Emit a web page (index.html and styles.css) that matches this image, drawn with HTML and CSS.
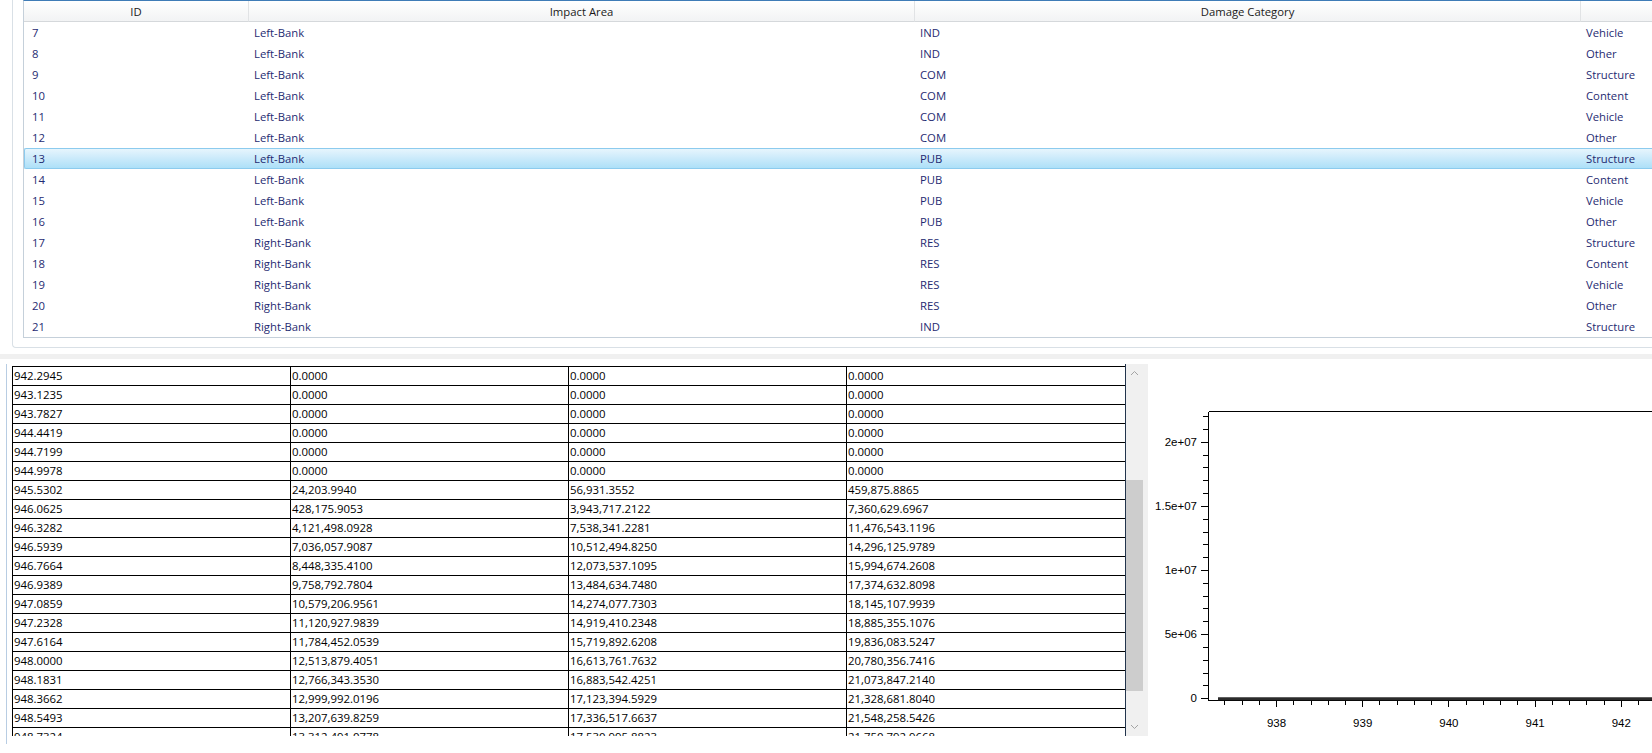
FILE: index.html
```html
<!DOCTYPE html>
<html>
<head>
  <title>Damage Functions</title>
  <link rel="stylesheet" href="styles.css">
</head>
<body>
  <div class="top-panel">
    <div class="group-box">
      <table class="data-grid">
        <colgroup>
          <col class="c-id">
          <col class="c-wide">
          <col class="c-wide">
          <col class="c-last">
        </colgroup>
        <thead>
          <tr>
            <th>ID</th>
            <th>Impact Area</th>
            <th>Damage Category</th>
            <th></th>
          </tr>
        </thead>
        <tbody>
          <tr><td>7</td><td>Left-Bank</td><td>IND</td><td>Vehicle</td></tr>
          <tr><td>8</td><td>Left-Bank</td><td>IND</td><td>Other</td></tr>
          <tr><td>9</td><td>Left-Bank</td><td>COM</td><td>Structure</td></tr>
          <tr><td>10</td><td>Left-Bank</td><td>COM</td><td>Content</td></tr>
          <tr><td>11</td><td>Left-Bank</td><td>COM</td><td>Vehicle</td></tr>
          <tr><td>12</td><td>Left-Bank</td><td>COM</td><td>Other</td></tr>
          <tr class="selected"><td>13</td><td>Left-Bank</td><td>PUB</td><td>Structure</td></tr>
          <tr><td>14</td><td>Left-Bank</td><td>PUB</td><td>Content</td></tr>
          <tr><td>15</td><td>Left-Bank</td><td>PUB</td><td>Vehicle</td></tr>
          <tr><td>16</td><td>Left-Bank</td><td>PUB</td><td>Other</td></tr>
          <tr><td>17</td><td>Right-Bank</td><td>RES</td><td>Structure</td></tr>
          <tr><td>18</td><td>Right-Bank</td><td>RES</td><td>Content</td></tr>
          <tr><td>19</td><td>Right-Bank</td><td>RES</td><td>Vehicle</td></tr>
          <tr><td>20</td><td>Right-Bank</td><td>RES</td><td>Other</td></tr>
          <tr><td>21</td><td>Right-Bank</td><td>IND</td><td>Structure</td></tr>
        </tbody>
      </table>
    </div>
  </div>

  <div class="splitter"></div>

  <div class="bottom-panel">
    <div class="grid-area">
      <div class="grid-view">
        <div class="values-wrap">
          <table class="values">
            <colgroup>
              <col class="v-col">
              <col class="v-col">
              <col class="v-col">
              <col class="v-col">
            </colgroup>
            <tbody>
              <tr><td>942.2945</td><td>0.0000</td><td>0.0000</td><td>0.0000</td></tr>
              <tr><td>943.1235</td><td>0.0000</td><td>0.0000</td><td>0.0000</td></tr>
              <tr><td>943.7827</td><td>0.0000</td><td>0.0000</td><td>0.0000</td></tr>
              <tr><td>944.4419</td><td>0.0000</td><td>0.0000</td><td>0.0000</td></tr>
              <tr><td>944.7199</td><td>0.0000</td><td>0.0000</td><td>0.0000</td></tr>
              <tr><td>944.9978</td><td>0.0000</td><td>0.0000</td><td>0.0000</td></tr>
              <tr><td>945.5302</td><td>24,203.9940</td><td>56,931.3552</td><td>459,875.8865</td></tr>
              <tr><td>946.0625</td><td>428,175.9053</td><td>3,943,717.2122</td><td>7,360,629.6967</td></tr>
              <tr><td>946.3282</td><td>4,121,498.0928</td><td>7,538,341.2281</td><td>11,476,543.1196</td></tr>
              <tr><td>946.5939</td><td>7,036,057.9087</td><td>10,512,494.8250</td><td>14,296,125.9789</td></tr>
              <tr><td>946.7664</td><td>8,448,335.4100</td><td>12,073,537.1095</td><td>15,994,674.2608</td></tr>
              <tr><td>946.9389</td><td>9,758,792.7804</td><td>13,484,634.7480</td><td>17,374,632.8098</td></tr>
              <tr><td>947.0859</td><td>10,579,206.9561</td><td>14,274,077.7303</td><td>18,145,107.9939</td></tr>
              <tr><td>947.2328</td><td>11,120,927.9839</td><td>14,919,410.2348</td><td>18,885,355.1076</td></tr>
              <tr><td>947.6164</td><td>11,784,452.0539</td><td>15,719,892.6208</td><td>19,836,083.5247</td></tr>
              <tr><td>948.0000</td><td>12,513,879.4051</td><td>16,613,761.7632</td><td>20,780,356.7416</td></tr>
              <tr><td>948.1831</td><td>12,766,343.3530</td><td>16,883,542.4251</td><td>21,073,847.2140</td></tr>
              <tr><td>948.3662</td><td>12,999,992.0196</td><td>17,123,394.5929</td><td>21,328,681.8040</td></tr>
              <tr><td>948.5493</td><td>13,207,639.8259</td><td>17,336,517.6637</td><td>21,548,258.5426</td></tr>
              <tr><td>948.7324</td><td>13,312,491.0778</td><td>17,530,995.8823</td><td>21,750,792.9668</td></tr>
            </tbody>
          </table>
        </div>
        <div class="scrollbar">
          <div class="sb-btn">
            <svg width="9" height="6" viewBox="0 0 9 6"><path d="M1 5 L4.5 1.5 L8 5" fill="none" stroke="#a3a3a3" stroke-width="1"/></svg>
          </div>
          <div class="sb-thumb"></div>
          <div class="sb-btn down">
            <svg width="9" height="6" viewBox="0 0 9 6"><path d="M1 1 L4.5 4.5 L8 1" fill="none" stroke="#a3a3a3" stroke-width="1"/></svg>
          </div>
        </div>
      </div>
    </div>

    <div class="chart">
      <svg class="plot" width="504" height="389" viewBox="0 0 504 389">
        <g class="axes">
          <line x1="60.5" y1="47.5" x2="60.5" y2="337"/>
          <line x1="60.5" y1="47.5" x2="504" y2="47.5"/>
          <line x1="60.5" y1="336.5" x2="504" y2="336.5"/>
          <g id="y-ticks"></g>
          <g id="x-ticks"></g>
        </g>
        <line class="series" x1="70" y1="334.7" x2="504" y2="334.7"/>
        <g class="y-labels">
          <text x="49" y="338.3">0</text>
          <text x="49" y="274.2">5e+06</text>
          <text x="49" y="210">1e+07</text>
          <text x="49" y="145.9">1.5e+07</text>
          <text x="49" y="81.7">2e+07</text>
        </g>
        <g class="x-labels">
          <text x="128.5" y="363">938</text>
          <text x="214.7" y="363">939</text>
          <text x="300.9" y="363">940</text>
          <text x="387.1" y="363">941</text>
          <text x="473.3" y="363">942</text>
        </g>
      </svg>
    </div>
  </div>

  <script>
    const svgNS = 'http://www.w3.org/2000/svg';
    const yTicks = document.getElementById('y-ticks');
    const xTicks = document.getElementById('x-ticks');

    function addLine(group, x1, y1, x2, y2) {
      const l = document.createElementNS(svgNS, 'line');
      l.setAttribute('x1', x1);
      l.setAttribute('y1', y1);
      l.setAttribute('x2', x2);
      l.setAttribute('y2', y2);
      group.appendChild(l);
    }

    // y axis: minor tick every 1e6, long tick every 5e6
    for (let i = 0; i <= 22; i++) {
      const y = Math.round(334.3 - i * 12.83) + 0.5;
      addLine(yTicks, i % 5 === 0 ? 53 : 55, y, 60.5, y);
    }

    // x axis: minor tick every 0.2, long tick on whole numbers
    for (let i = 0; ; i++) {
      const x = Math.round(76.3 + i * 17.24) + 0.5;
      if (x > 504) break;
      addLine(xTicks, x, 336.5, x, (i - 3) % 5 === 0 ? 343 : 341);
    }
  </script>
</body>
</html>
```

FILE: styles.css
```css
html,
body {
  margin: 0;
  padding: 0;
}

body {
  width: 1652px;
  height: 753px;
  overflow: hidden;
  background: #fff;
  font-family: "Open Sans", "Noto Sans", sans-serif;
}

/* Top: asset grid */

.top-panel {
  height: 348px;
}

.group-box {
  margin-left: 12px;
  height: 347px;
  padding-left: 10px;
  border-left: 1px solid #d9e0e6;
  border-bottom: 1px solid #d9e0e6;
  border-bottom-left-radius: 4px;
  overflow: hidden;
}

.data-grid {
  width: 1858px;
  table-layout: fixed;
  border-collapse: separate;
  border-spacing: 0;
  border-top: 1px solid #3f7cb7;
  border-left: 1px solid #c5d0da;
  border-bottom: 1px solid #c5d0da;
  font-size: 11.3px;
}

.data-grid .c-id {
  width: 225px;
}

.data-grid .c-wide {
  width: 666px;
}

.data-grid .c-last {
  width: 300px;
}

.data-grid th {
  height: 21px;
  box-sizing: border-box;
  padding: 0;
  font-weight: normal;
  color: #1a1a1a;
  background: linear-gradient(#ffffff, #f2f3f4);
  border-bottom: 1px solid #d5d8db;
  border-right: 1px solid #e1e3e5;
}

.data-grid th:last-child {
  border-right: none;
}

.data-grid td {
  height: 21px;
  box-sizing: border-box;
  padding: 0 0 0 5px;
  color: #1f2b72;
  white-space: nowrap;
}

.data-grid td:first-child {
  padding-left: 8px;
}

.data-grid tr.selected td {
  background: linear-gradient(#e6f5fd, #cdebfb 45%, #ade0f8);
  border-top: 1px solid #8ccbee;
  border-bottom: 1px solid #8ccbee;
}

.data-grid tr.selected td:first-child {
  border-left: 1px solid #8ccbee;
  border-radius: 2px 0 0 2px;
  padding-left: 7px;
}

.splitter {
  margin-top: 6px;
  height: 5px;
  background: #f0f0f0;
}

/* Bottom: values grid + plot */

.bottom-panel {
  display: flex;
  margin-top: 5px;
  height: 389px;
}

.grid-area {
  margin-left: 6px;
  padding-left: 5px;
  height: 380px;
  border-left: 1px solid #b8cde3;
}

.grid-view {
  display: flex;
  height: 372px;
}

.values-wrap {
  width: 1113px;
  padding-top: 2px;
  overflow: hidden;
}

.values {
  width: 1113px;
  table-layout: fixed;
  border-collapse: separate;
  border-spacing: 0;
  border-top: 1px solid #000;
  border-left: 1px solid #000;
  font-size: 11.4px;
}

.values .v-col {
  width: 278px;
}

.values td {
  height: 19px;
  box-sizing: border-box;
  padding: 0 0 0 1px;
  border-right: 1px solid #000;
  border-bottom: 1px solid #000;
  color: #000;
  line-height: 18px;
  white-space: nowrap;
  overflow: hidden;
}

.values td:last-child {
  border-right: none;
}

.scrollbar {
  width: 22px;
  border-left: 1px solid #22344c;
  background: #f0f0f0;
  display: flex;
  flex-direction: column;
}

.sb-btn {
  width: 17px;
  height: 18px;
  display: flex;
  align-items: center;
  justify-content: center;
}

.sb-btn svg {
  display: block;
}

.sb-btn.down {
  margin-top: auto;
}

.sb-thumb {
  width: 17px;
  height: 211px;
  margin-top: 98px;
  background: #cdcdcd;
}

.chart {
  flex: 1;
}

.plot {
  display: block;
}

.plot .axes {
  stroke: #000;
  stroke-width: 1;
  shape-rendering: crispEdges;
}

.plot .series {
  stroke: #2b2b2b;
  stroke-width: 3;
}

.plot text {
  font-family: "Liberation Sans", Arial, sans-serif;
  font-size: 11.5px;
  fill: #000;
}

.plot .y-labels text {
  text-anchor: end;
}

.plot .x-labels text {
  text-anchor: middle;
}
```
